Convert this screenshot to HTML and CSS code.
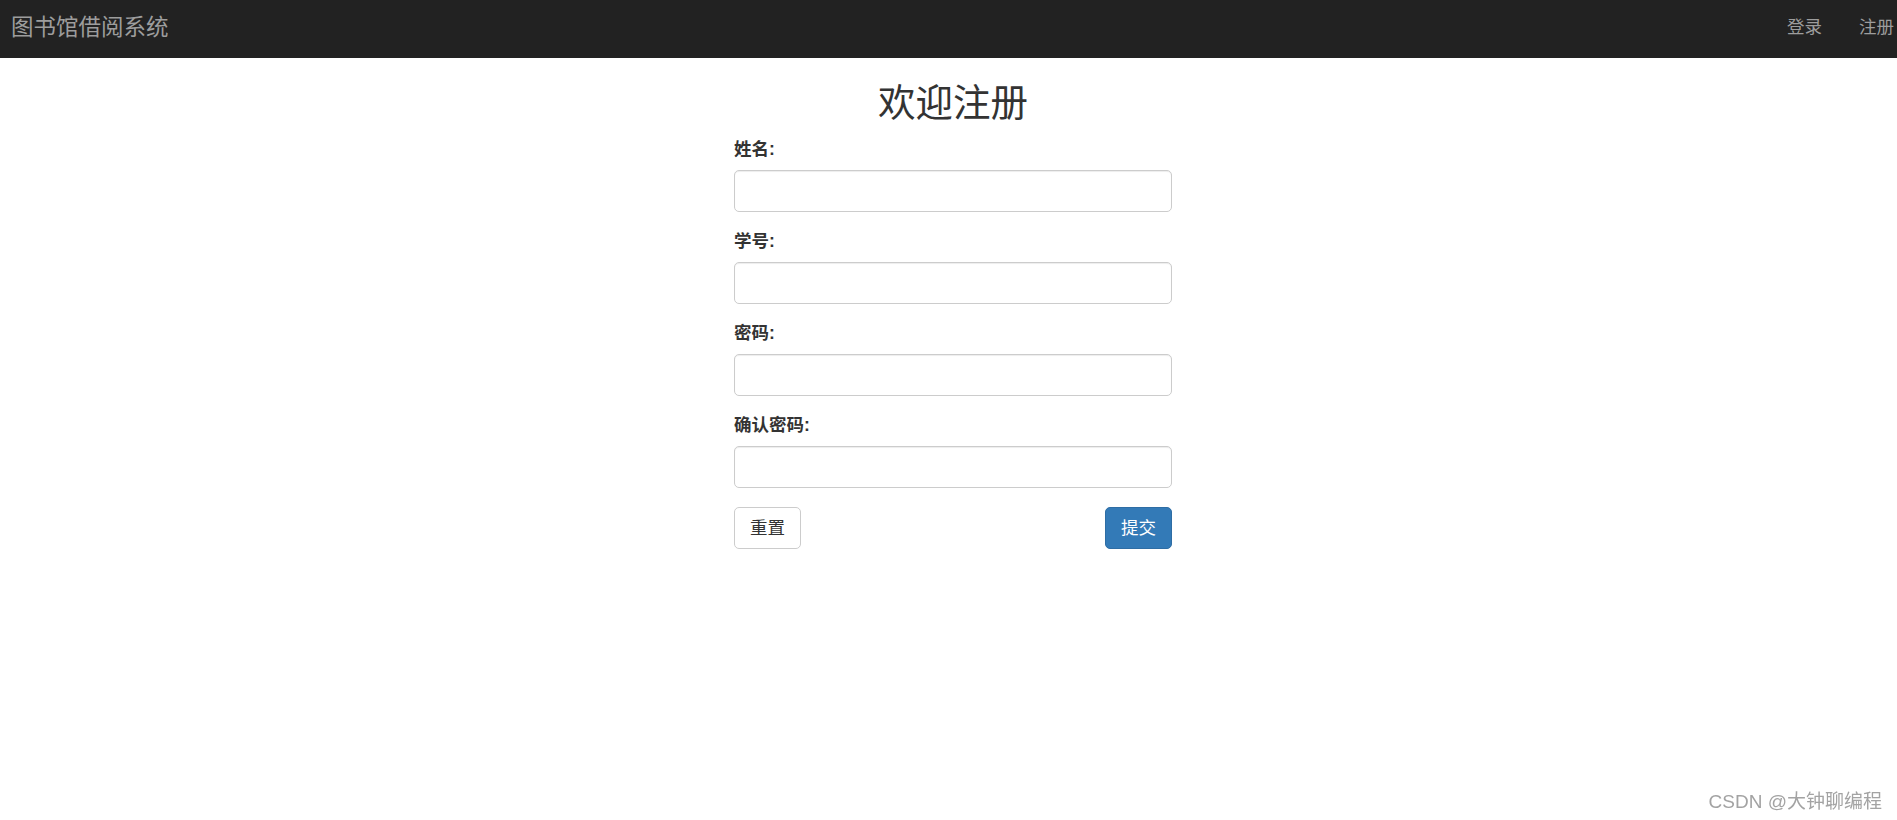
FILE: index.html
```html
<!DOCTYPE html>
<html lang="zh-CN">

<head>
    <meta charset="UTF-8">
    <title>图书馆借阅系统 - 注册</title>
    <link rel="stylesheet" href="styles.css">
</head>

<body>
    <nav class="navbar">
        <a class="navbar-brand" href="#">图书馆借阅系统</a>
        <ul class="navbar-nav">
            <li><a href="#">登录</a></li>
            <li><a href="#">注册</a></li>
        </ul>
    </nav>

    <div class="page">
        <form class="register-form">
            <h2 class="form-title">欢迎注册</h2>

            <div class="form-group">
                <label for="name">姓名:</label>
                <input type="text" id="name" class="form-control">
            </div>

            <div class="form-group">
                <label for="sno">学号:</label>
                <input type="text" id="sno" class="form-control">
            </div>

            <div class="form-group">
                <label for="password">密码:</label>
                <input type="password" id="password" class="form-control">
            </div>

            <div class="form-group">
                <label for="confirm">确认密码:</label>
                <input type="password" id="confirm" class="form-control">
            </div>

            <div class="form-actions">
                <button type="reset" class="btn btn-default">重置</button>
                <button type="submit" class="btn btn-primary">提交</button>
            </div>
        </form>
    </div>

    <div class="watermark">CSDN @大钟聊编程</div>
</body>

</html>
```

FILE: styles.css
```css
:root {
    --navbar-bg: #222222;
    --navbar-text: #9d9d9d;
    --text-color: #333333;
    --border-color: #cccccc;
    --primary: #337ab7;
    --primary-border: #2e6da4;
}

* {
    box-sizing: border-box;
}

body {
    margin: 0;
    background-color: #ffffff;
    color: var(--text-color);
    font-family: "Liberation Sans", "Noto Sans CJK SC", sans-serif;
    font-size: 17.5px;
    line-height: 25px;
}

/* Barre de navigation */
.navbar {
    display: flex;
    align-items: center;
    justify-content: space-between;
    height: 58px;
    padding: 0 3px 3px 11px;
    background-color: var(--navbar-bg);
}

.navbar-brand {
    font-size: 22.5px;
    line-height: 28px;
    color: var(--navbar-text);
    text-decoration: none;
}

.navbar-nav {
    display: flex;
    gap: 37px;
    margin: 0;
    padding: 0 0 1px;
    list-style: none;
}

.navbar-nav a {
    color: var(--navbar-text);
    text-decoration: none;
    font-size: 17.5px;
}

/* Formulaire */
.page {
    display: flex;
    justify-content: center;
    padding-left: 9px;
}

.register-form {
    width: 438px;
}

.form-title {
    margin: 25px 0 15px;
    font-size: 37.5px;
    font-weight: 400;
    line-height: 41px;
    text-align: center;
}

.form-group {
    margin-bottom: 19px;
}

.form-group label {
    display: block;
    margin-bottom: 10px;
    font-weight: 700;
    line-height: 21px;
}

.form-control {
    display: block;
    width: 100%;
    height: 42px;
    padding: 7px 15px;
    font-size: 17.5px;
    border: 1px solid var(--border-color);
    border-radius: 5px;
    box-shadow: inset 0 1px 1px rgba(0, 0, 0, 0.075);
    outline: none;
}

.form-actions {
    display: flex;
    justify-content: space-between;
}

.btn {
    height: 42px;
    padding: 7px 15px;
    font-family: inherit;
    font-size: 17.5px;
    line-height: 25px;
    border: 1px solid transparent;
    border-radius: 5px;
    cursor: pointer;
}

.btn-default {
    background-color: #ffffff;
    color: var(--text-color);
    border-color: var(--border-color);
}

.btn-primary {
    background-color: var(--primary);
    color: #ffffff;
    border-color: var(--primary-border);
}

/* Filigrane */
.watermark {
    position: fixed;
    right: 15px;
    bottom: 8px;
    font-size: 19px;
    line-height: 20px;
    color: #a3a3a3;
}
```
